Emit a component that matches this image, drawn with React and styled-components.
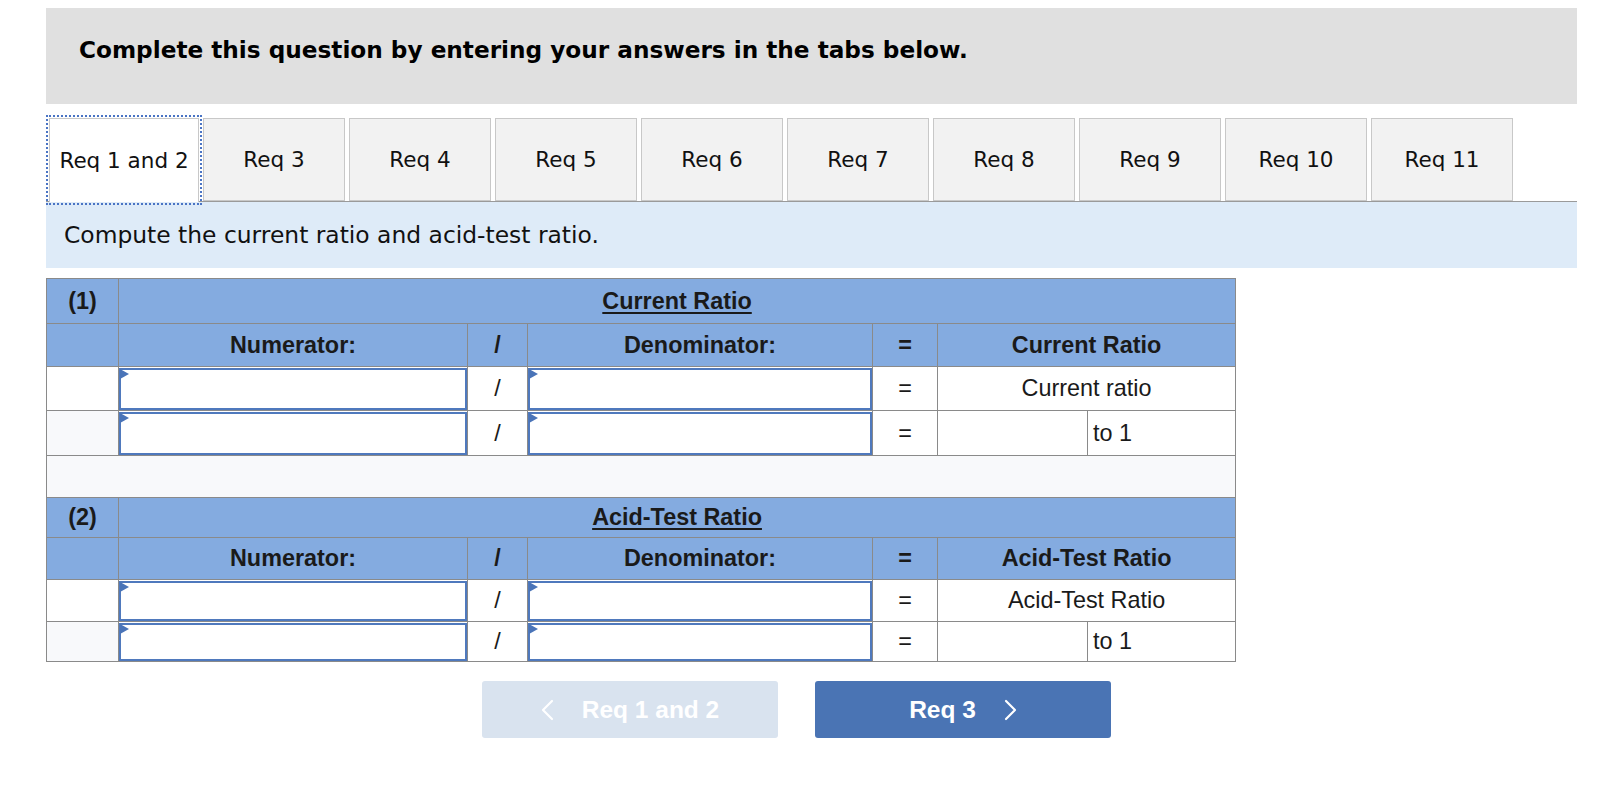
import React from "react";
import styled, { createGlobalStyle } from "styled-components";

const Global = createGlobalStyle`
  html, body { margin: 0; padding: 0; background: #ffffff; }
  body { font-family: "DejaVu Sans", Verdana, sans-serif; color: #000; }
`;

const Page = styled.div`
  padding: 8px 0 0 46px;
  width: 1531px;
`;

const Banner = styled.div`
  height: 96px;
  background: #e0e0e0;
  display: flex;
  align-items: center;
  padding-left: 33px;
  font-family: "DejaVu Sans", Verdana, sans-serif;
  font-weight: bold;
  font-size: 23.2px;
  padding-bottom: 14px;
  box-sizing: border-box;
`;

const TabBar = styled.div`
  margin-top: 14px;
  height: 83px;
  display: flex;
  align-items: flex-end;
  gap: 4px;
  padding-left: 3px;
  border-bottom: 1px solid #9a9a9a;
`;

const Tab = styled.div`
  box-sizing: border-box;
  width: ${(p) => (p.$active ? 150 : 142)}px;
  margin-bottom: ${(p) => (p.$active ? "-1px" : "0")};
  height: ${(p) => (p.$active ? 84 : 83)}px;
  border: 1px solid #c8c8c8;
  border-bottom: ${(p) => (p.$active ? "none" : "1px solid #c8c8c8")};
  background: ${(p) => (p.$active ? "#ffffff" : "#f2f2f2")};
  outline: ${(p) => (p.$active ? "2px dotted #4a74c4" : "none")};
  outline-offset: 1px;
  display: flex;
  align-items: center;
  justify-content: center;
  font-size: 21.5px;
  color: #111;
  white-space: nowrap;
`;

const Instruction = styled.div`
  height: 66px;
  background: #deebf8;
  display: flex;
  align-items: center;
  padding-left: 18px;
  font-size: 23.4px;
  color: #111;
  box-sizing: border-box;
`;

const Table = styled.table`
  margin-top: 10px;
  border-collapse: collapse;
  table-layout: fixed;
  width: 1189px;
  font-family: "Liberation Sans", Arial, sans-serif;
  font-size: 23.4px;
  color: #1a1a1a;
`;

const Row = styled.tr`
  height: ${(p) => p.$h}px;
`;

const Cell = styled.td`
  border: 1px solid #8a8a8a;
  padding: 0;
  text-align: ${(p) => p.$align || "center"};
  padding-left: ${(p) => (p.$align === "left" ? "5px" : "0")};
  vertical-align: middle;
  background: ${(p) => p.$bg || "#ffffff"};
  font-weight: ${(p) => (p.$bold ? "bold" : "normal")};
  text-decoration: ${(p) => (p.$underline ? "underline" : "none")};
  text-underline-offset: 3px;
  text-decoration-thickness: 2px;
  white-space: nowrap;
`;

const InputCell = styled.td`
  border: 1px solid #8a8a8a;
  padding: 0;
  background: #ffffff;
`;

const InputWrap = styled.div`
  position: relative;
  height: ${(p) => p.$h - 2}px;
`;

const Field = styled.input`
  box-sizing: border-box;
  width: 100%;
  height: 100%;
  border: 2px solid #4f79bd;
  margin: 0;
  padding: 0 8px;
  font: inherit;
  background: #ffffff;
  outline: none;
`;

const Marker = styled.span`
  position: absolute;
  left: 1px;
  top: 1px;
  width: 0;
  height: 0;
  border-top: 5px solid transparent;
  border-bottom: 5px solid transparent;
  border-left: 9px solid #4a74b8;
`;

const Buttons = styled.div`
  display: flex;
  gap: 37px;
  margin: 19px 0 0 436px;
`;

const NavButton = styled.button`
  width: 296px;
  height: 57px;
  border: none;
  border-radius: 3px;
  background: ${(p) => (p.$primary ? "#4a74b4" : "#d9e3ef")};
  color: #ffffff;
  font-family: "Liberation Sans", Arial, sans-serif;
  font-weight: bold;
  font-size: 24.5px;
  letter-spacing: 0;
  display: flex;
  align-items: center;
  justify-content: center;
  gap: 28px;
  cursor: pointer;
  padding: 0;
`;

const Chevron = ({ dir }) => (
  <svg width="13" height="22" viewBox="0 0 13 22" fill="none">
    <path
      d={dir === "left" ? "M11 2 L2 11 L11 20" : "M2 2 L11 11 L2 20"}
      stroke="#ffffff"
      strokeWidth="2.2"
      strokeLinecap="round"
      strokeLinejoin="round"
    />
  </svg>
);

const Input = ({ h }) => (
  <InputCell>
    <InputWrap $h={h}>
      <Field type="text" />
      <Marker />
    </InputWrap>
  </InputCell>
);

const blue = "#84abe0";
const pale = "#f8f9fb";

const Section = ({ num, title, value, hs }) => (
  <>
    <Row $h={hs[0]}>
      <Cell $bg={blue} $bold>{num}</Cell>
      <Cell $bg={blue} $bold $underline colSpan={6}>{title}</Cell>
    </Row>
    <Row $h={hs[1]}>
      <Cell $bg={blue} />
      <Cell $bg={blue} $bold>Numerator:</Cell>
      <Cell $bg={blue} $bold>/</Cell>
      <Cell $bg={blue} $bold>Denominator:</Cell>
      <Cell $bg={blue} $bold>=</Cell>
      <Cell $bg={blue} $bold colSpan={2}>{title}</Cell>
    </Row>
    <Row $h={hs[2]}>
      <Cell />
      <Input h={hs[2]} />
      <Cell>/</Cell>
      <Input h={hs[2]} />
      <Cell>=</Cell>
      <Cell colSpan={2}>{value}</Cell>
    </Row>
    <Row $h={hs[3]}>
      <Cell $bg={pale} />
      <Input h={hs[3]} />
      <Cell>/</Cell>
      <Input h={hs[3]} />
      <Cell>=</Cell>
      <Cell />
      <Cell $align="left">to 1</Cell>
    </Row>
  </>
);

const tabs = ["Req 1 and 2", "Req 3", "Req 4", "Req 5", "Req 6", "Req 7", "Req 8", "Req 9", "Req 10", "Req 11"];

export default function App() {
  return (
    <>
      <Global />
      <Page>
        <Banner>Complete this question by entering your answers in the tabs below.</Banner>
        <TabBar>
          {tabs.map((t, i) => (
            <Tab key={t} $active={i === 0}>{t}</Tab>
          ))}
        </TabBar>
        <Instruction>Compute the current ratio and acid-test ratio.</Instruction>
        <Table>
          <colgroup>
            <col style={{ width: 72 }} />
            <col style={{ width: 349 }} />
            <col style={{ width: 60 }} />
            <col style={{ width: 345 }} />
            <col style={{ width: 65 }} />
            <col style={{ width: 150 }} />
            <col style={{ width: 148 }} />
          </colgroup>
          <tbody>
            <Section num="(1)" title="Current Ratio" value="Current ratio" hs={[45, 43, 44, 45]} />
            <Row $h={42}>
              <Cell $bg={pale} colSpan={7} />
            </Row>
            <Section num="(2)" title="Acid-Test Ratio" value="Acid-Test Ratio" hs={[40, 42, 42, 40]} />
          </tbody>
        </Table>
        <Buttons>
          <NavButton>
            <Chevron dir="left" />
            <span>Req 1 and 2</span>
          </NavButton>
          <NavButton $primary>
            <span>Req 3</span>
            <Chevron dir="right" />
          </NavButton>
        </Buttons>
      </Page>
    </>
  );
}
